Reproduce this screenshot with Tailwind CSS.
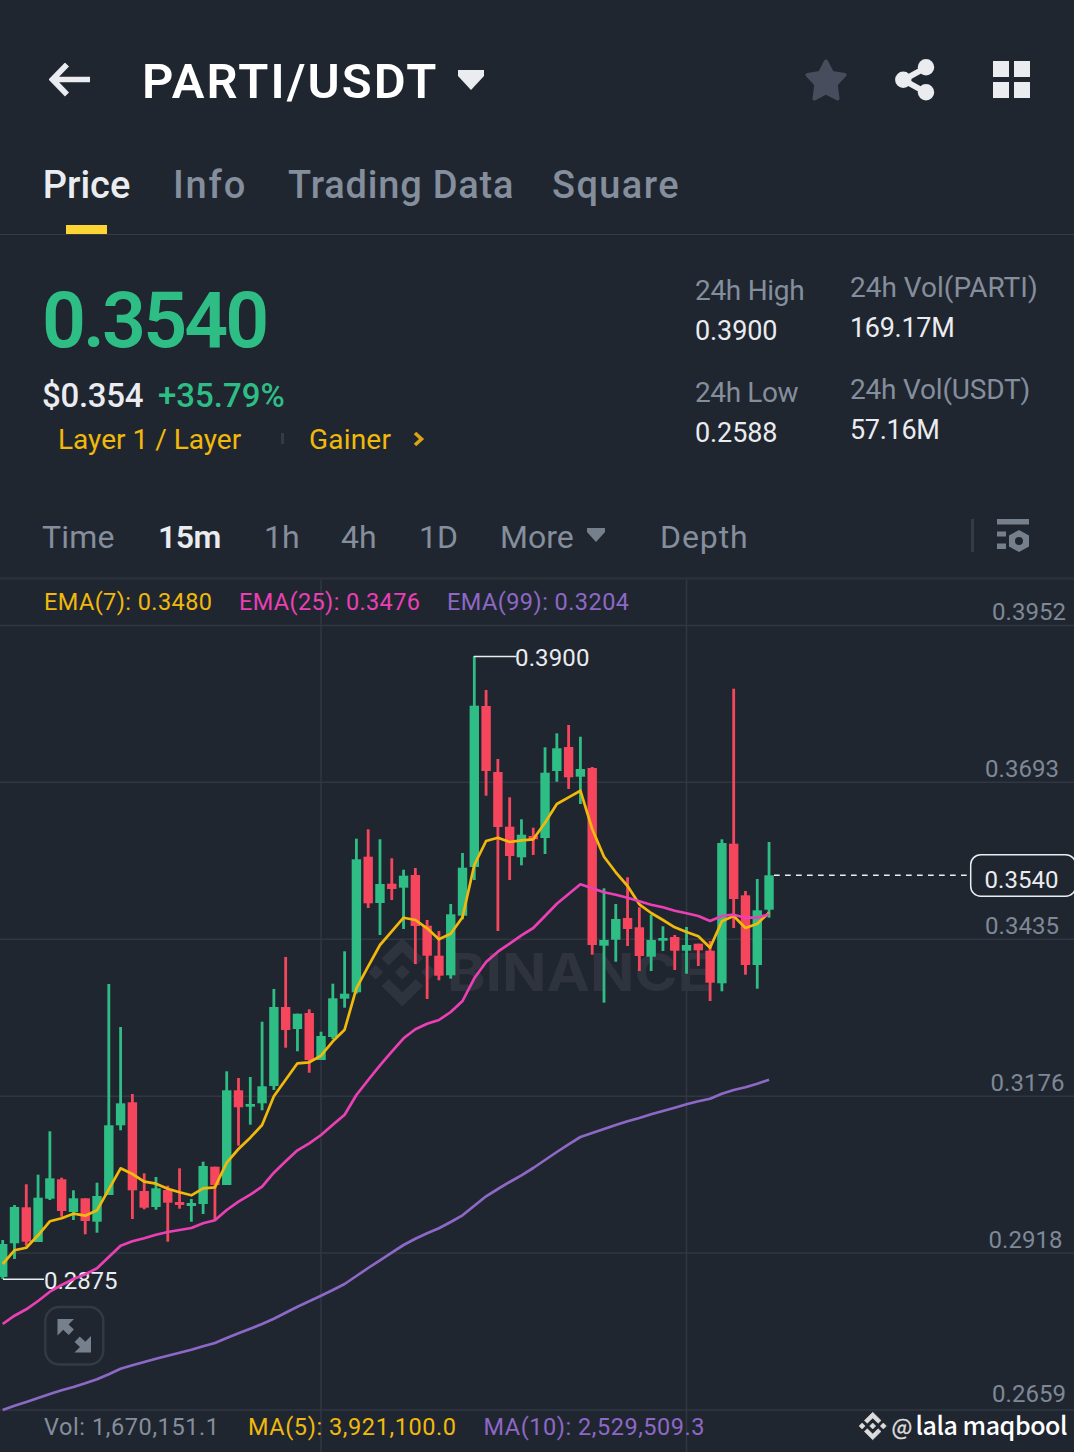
<!DOCTYPE html>
<html lang="en">
  <head>
    <meta charset="UTF-8" />
    <meta name="viewport" content="width=device-width, initial-scale=1.0" />
    <title>PARTI/USDT</title>
    <script src="https://cdn.jsdelivr.net/npm/@tailwindcss/browser@4"></script>
  </head>
  <body
    class="w-[1074px] h-[1452px] overflow-hidden bg-[#202630] font-[Roboto,sans-serif] text-[#848e9c] whitespace-nowrap"
  >
    <header class="flex items-center h-[160px] pl-[49px] pr-[44px]">
      <svg class="w-[42px] h-[34px]" viewBox="0 0 42 34" fill="none" stroke="#eaecef" stroke-width="5.6">
        <path d="M41 16.500H4M18 1.500L3.500 16.500L18 31.500" />
      </svg>
      <h1 class="ml-[51px] pt-[3px] w-[295px] text-[49px] leading-none font-semibold text-white tracking-[2.1px]">PARTI/USDT</h1>
      <svg class="ml-[21px] w-[26px] h-[20px]" viewBox="0 0 26 20" fill="#eaecef">
        <path d="M0 0H26V6L13 20L0 6Z" />
      </svg>
      <svg class="ml-auto w-[42px] h-[42px]" viewBox="0 0 42 42" fill="#474d5c" stroke="#474d5c" stroke-width="4" stroke-linejoin="round">
        <path d="M21 2.500L27 14L39.500 16L30.700 25.500L32.500 39.500L21 33.500L9.500 39.500L11.300 25.500L2.500 16L15 14Z" />
      </svg>
      <svg class="ml-[48px] w-[40px] h-[42px]" viewBox="0 0 40 42" fill="#eaecef">
        <path d="M31 8.500L8.500 21L31 33.500" fill="none" stroke="#eaecef" stroke-width="6" />
        <circle cx="31" cy="8.300" r="8.200" />
        <circle cx="8.300" cy="20.800" r="8.200" />
        <circle cx="31" cy="33.300" r="8.200" />
      </svg>
      <div class="ml-[58px] mb-px grid grid-cols-2 gap-[5px] w-[37px]">
        <span class="h-4 bg-[#eaecef]"></span>
        <span class="h-4 bg-[#eaecef]"></span>
        <span class="h-4 bg-[#eaecef]"></span>
        <span class="h-4 bg-[#eaecef]"></span>
      </div>
    </header>

    <nav class="flex h-[75px] pl-[42px] border-b border-[#333b47] text-[38px] leading-[50px] font-medium">
      <div class="flex flex-col justify-between items-center w-[89px] text-[#eaecef]">
        <a>Price</a>
        <span class="w-[41px] h-[9px] bg-[#fcd535]"></span>
      </div>
      <a class="ml-[42px] w-[73px] tracking-[1.8px]">Info</a>
      <a class="ml-[42px] w-[224px] tracking-[0.8px]">Trading Data</a>
      <a class="ml-[40px] w-[126px] tracking-[1.4px]">Square</a>
    </nav>

    <section class="flex h-[265px] pl-[42px]">
      <div class="w-[653px] pt-[46px]">
        <div class="text-[77px] leading-[80px] font-semibold text-[#2ebd85] tracking-[-2.9px]">0.3540</div>
        <div class="mt-[15px] flex text-[33px] leading-[40px] font-medium">
          <span class="w-[116px] text-[#eaecef] tracking-[-0.3px]">$0.354</span>
          <span class="text-[#2ebd85]">+35.79%</span>
        </div>
        <div class="mt-1 flex items-center pl-4 text-[28px] leading-[40px] text-[#f0b90b]">
          <span class="w-[223px]">Layer 1 / Layer</span>
          <span class="mb-[3px] w-[3px] h-[11px] bg-[#333b47]"></span>
          <span class="ml-[25px] w-[104px] tracking-[0.2px]">Gainer</span>
          <svg class="mb-[3px] w-[12px] h-[16px]" viewBox="0 0 12 16" fill="none" stroke="#d9a514" stroke-width="3.600">
            <path d="M2 2L8.500 8L2 14" />
          </svg>
        </div>
      </div>
      <dl class="w-[155px] pt-9 text-[28px] leading-[40px]">
        <dt class="-tracking-[0.3px]">24h High</dt>
        <dd class="text-[27px] text-[#eaecef] tracking-[-0.1px]">0.3900</dd>
        <dt class="mt-[22px] -tracking-[0.4px]">24h Low</dt>
        <dd class="text-[27px] text-[#eaecef] tracking-[-0.1px]">0.2588</dd>
      </dl>
      <dl class="pt-[33px] text-[28px] leading-[40px]">
        <dt>24h Vol(PARTI)</dt>
        <dd class="text-[27px] text-[#eaecef] tracking-[-0.3px]">169.17M</dd>
        <dt class="mt-[22px] tracking-[-0.2px]">24h Vol(USDT)</dt>
        <dd class="text-[27px] text-[#eaecef] tracking-[-0.3px]">57.16M</dd>
      </dl>
    </section>

    <section class="flex items-center h-[77px] pl-[42px] pb-[3px] text-[32px] leading-[40px]">
      <span class="w-[116px] tracking-[0.2px]">Time</span>
      <span class="w-[106px] font-semibold text-[#eaecef] tracking-[-0.5px]">15m</span>
      <span class="w-[77px]">1h</span>
      <span class="w-[78px]">4h</span>
      <span class="w-[81px]">1D</span>
      <span class="w-[87px]">More</span>
      <svg class="mb-1 w-[18px] h-[14px]" viewBox="0 0 18 14" fill="#76808d">
        <path d="M0 0H18V4L9 14L0 4Z" />
      </svg>
      <span class="ml-[55px] w-[311px] tracking-[0.9px]">Depth</span>
      <span class="mb-[3px] w-[3px] h-[33px] bg-[#333b47]"></span>
      <svg class="ml-[23px] mb-[3px] w-[32px] h-[33px]" viewBox="0 0 32 33" fill="#76808d">
        <path d="M0 0H32V5.500H0ZM0 12.500H9V17.500H0ZM0 24.500H9V30H0Z" />
        <path fill-rule="evenodd" d="M22 11L32 16.500V27.500L22 33L12 27.500V16.500ZM22 18A4 4 0 1 0 22 26A4 4 0 1 0 22 18Z" />
      </svg>
    </section>

    <!-- chart: user units are page pixels -->
    <svg class="block w-[1074px] h-[875px]" viewBox="0 577 1074 875" font-family="Roboto, sans-serif" font-size="24">
      <defs>
        <g id="logo">
          <path d="M0 -34.300L20.800 -13.700L13.500 -6.700L0 -20.300L-13.500 -6.700L-20.800 -13.700Z" />
          <path d="M0 34.300L20.800 13.700L13.500 6.700L0 20.300L-13.500 6.700L-20.800 13.700Z" />
          <path d="M0 -7.500L7.500 0L0 7.500L-7.500 0Z" />
          <path d="M-26.500 -7.500L-19 0L-26.500 7.500L-34 0Z" />
          <path d="M26.500 -7.500L34 0L26.500 7.500L19 0Z" />
        </g>
      </defs>

      <g fill="#2e333e">
        <use href="#logo" x="402.300" y="972.300" />
        <text x="447" y="991" font-family="Inter, sans-serif" font-weight="700" font-size="52.500" textLength="266" lengthAdjust="spacingAndGlyphs">BINANCE</text>
      </g>

      <path d="M0 578.500H1074" stroke="#282f39" stroke-width="3" />
      <path
        d="M0 625.500H1074M0 782.300H1074M0 939.200H1074M0 1096.200H1074M0 1253H1074M0 1410H1074M321 580V1452M686.500 580V1452"
        stroke="#303742" stroke-width="1.500"
      />

      <g id="candles"></g>

      <g fill="#eaecef">
        <path d="M474 656.500H516M3 1279.300H44" stroke="#eaecef" stroke-width="1.500" />
        <text x="515" y="665.700" textLength="74.500">0.3900</text>
        <text x="44" y="1289" textLength="73.500">0.2875</text>
      </g>

      <g id="lines" fill="none" stroke-width="2.700" stroke-linejoin="round"></g>

      <path d="M774 875.300H968" stroke="#eaecef" stroke-width="1.500" stroke-dasharray="5.700 5.300" />
      <rect x="970.700" y="854.700" width="105" height="41.500" rx="10" fill="#202630" stroke="#eaecef" stroke-width="1.500" />
      <text x="984.500" y="887.700" fill="#eaecef" textLength="74">0.3540</text>

      <g fill="#7f8896">
        <text x="992" y="619.700" textLength="74">0.3952</text>
        <text x="985" y="777" textLength="74">0.3693</text>
        <text x="985" y="934" textLength="74">0.3435</text>
        <text x="990.500" y="1091" textLength="74">0.3176</text>
        <text x="988.500" y="1248" textLength="74">0.2918</text>
        <text x="992" y="1402" textLength="74">0.2659</text>
      </g>

      <g font-size="23.500">
        <text x="44" y="609.700" fill="#f0b90b" textLength="168">EMA(7): 0.3480</text>
        <text x="239" y="609.700" fill="#eb40b5" textLength="181">EMA(25): 0.3476</text>
        <text x="447" y="609.700" fill="#8d68c6" textLength="182">EMA(99): 0.3204</text>
        <text x="44" y="1434.700" fill="#848e9c" textLength="175">Vol: 1,670,151.1</text>
        <text x="248" y="1434.700" fill="#f0b90b" textLength="208">MA(5): 3,921,100.0</text>
        <text x="483.500" y="1434.700" fill="#8d68c6" textLength="221">MA(10): 2,529,509.3</text>
      </g>

      <rect x="45.300" y="1307" width="58" height="57.500" rx="14" fill="#202630" stroke="#333a45" stroke-width="2.400" />
      <g fill="#76808d" stroke="#76808d">
        <path d="M57.500 1319H74L57.500 1335.500ZM91 1352.500H74.500L91 1336Z" stroke="none" />
        <path d="M62 1323.500L71.300 1332.300M86.500 1348L77.200 1339.200" stroke-width="7.500" />
      </g>

      <g font-family="'Noto Sans CJK SC', sans-serif" font-size="25">
        <use href="#logo" transform="translate(872.700 1426) scale(.4)" fill="#dcdcdc" stroke="#dcdcdc" stroke-width="1.500" />
        <text x="891.500" y="1434.700" font-size="22" fill="#dcdcdc" stroke="#dcdcdc" stroke-width=".4">@</text>
        <text x="915.500" y="1434.700" fill="#fff" font-weight="500" textLength="152">lala maqbool</text>
      </g>
    </svg>

    <script>
      // [up, high, body top, body bottom, low]
      const candles = [
        [1, 1240, 1244, 1277, 1279], [1, 1205, 1207, 1243.3, 1259], [0, 1184.3, 1207.3, 1241.7, 1245.7],
        [1, 1174.7, 1197.7, 1242, 1242], [1, 1131.3, 1178.3, 1198.7, 1200], [0, 1177.7, 1179.3, 1211, 1216.7],
        [1, 1190.3, 1198.3, 1212, 1220], [0, 1198.3, 1198.3, 1221, 1234.3], [1, 1182.7, 1196, 1221.7, 1232.7],
        [1, 984, 1125.3, 1195, 1195], [1, 1027, 1103.3, 1125.3, 1130.3], [0, 1094, 1102.3, 1190.3, 1219],
        [0, 1173.3, 1191, 1207.7, 1209.3], [1, 1177, 1188.3, 1207, 1209.7], [0, 1185.7, 1190, 1202.7, 1241.7],
        [0, 1168.3, 1202, 1205, 1208.7], [1, 1199, 1203, 1206, 1221.7], [1, 1161.7, 1166, 1204, 1214],
        [0, 1166.7, 1166.7, 1185, 1220], [1, 1071.3, 1090.3, 1185, 1185], [0, 1078, 1090.3, 1107.3, 1145.7],
        [1, 1077, 1104, 1106.7, 1124.7], [1, 1021.7, 1086.3, 1103.3, 1110.3], [1, 989, 1007, 1086, 1090],
        [0, 957, 1007, 1030, 1047.7], [1, 1013.7, 1013.7, 1029, 1051.3], [0, 1009.3, 1013, 1060, 1072.7],
        [1, 1031.7, 1036, 1060, 1060], [1, 983.7, 998.3, 1037, 1039], [1, 951.3, 993.7, 998.7, 1007.7],
        [1, 838.7, 859.3, 992.3, 993.7], [0, 829.3, 856.7, 903.3, 908], [1, 839.3, 884, 903, 935],
        [0, 858.3, 883.7, 889, 900], [1, 869.7, 875.7, 887.7, 929], [0, 868, 875, 926, 964],
        [0, 920, 925.7, 955.7, 999], [0, 931, 955.7, 975.7, 980.3], [1, 904, 914.3, 975.3, 978.7],
        [1, 853, 867.7, 915.7, 919.3], [1, 656, 705.7, 867, 880], [0, 690, 706, 771, 795.7],
        [0, 759, 772, 827, 931], [0, 797.3, 826.7, 856, 880], [1, 819.3, 834.7, 857.3, 865.3],
        [0, 827.7, 836, 839.3, 855], [1, 747.3, 772.7, 838, 854], [1, 733.3, 748.3, 771, 781.7],
        [0, 725, 747, 777.3, 789], [1, 736.7, 769, 776.7, 804], [0, 767, 768, 945, 954.7],
        [1, 888.3, 940, 945.7, 1002.7], [1, 904, 919, 939.7, 961.7], [0, 877.3, 918, 929, 946],
        [0, 907.3, 927.3, 956, 971], [1, 914.7, 940, 956.7, 971], [1, 926.3, 938, 940.7, 951],
        [0, 935, 937, 950.7, 970], [1, 927, 945, 950.7, 973.7], [0, 943.7, 943.7, 950.3, 966],
        [0, 941, 950.7, 982.7, 1001], [1, 839.3, 843, 983.3, 991.3], [0, 688.7, 843.7, 899, 928],
        [0, 891, 895.3, 965, 974.7], [1, 879, 910.3, 965, 988.7], [1, 842, 875.3, 909.7, 917.7],
      ];
      const ema7 = [
        1264, 1250.3, 1247.7, 1235.3, 1221.3, 1218.3, 1213.7, 1215.7, 1210.3, 1189.3, 1168.3,
        1174, 1181.7, 1183.7, 1188.7, 1192.3, 1195.3, 1188.3, 1187.3, 1162.7, 1149, 1137.7,
        1125, 1096.3, 1079.7, 1063.3, 1062.3, 1055.7, 1041.3, 1029.7, 988.3, 966.3, 945,
        931.3, 917.7, 920, 928.3, 939.3, 933.7, 917.3, 865, 841, 837.7, 842,
        840.3, 839.3, 822.7, 804, 797.3, 790.7, 829, 856.7, 872.3, 886, 904.3,
        913, 920, 927.3, 932, 936.3, 947.7, 921.3, 916, 928, 923.7, 912.7,
      ];
      const ema25 = [
        1324, 1315.7, 1309.3, 1301, 1291.7, 1285, 1279, 1274.3, 1268.3, 1257, 1245.7,
        1241.3, 1238.3, 1234.7, 1232, 1230, 1228, 1223.3, 1220.3, 1210, 1201.7, 1194.7,
        1186.7, 1172.7, 1161.3, 1150.3, 1143.3, 1135, 1124.7, 1114.7, 1095, 1080, 1065.3,
        1051.7, 1038.3, 1029.3, 1023.7, 1020, 1012, 1001, 978.3, 962, 951.7, 943.7,
        935.3, 928, 916, 903.7, 894, 884.3, 888.3, 892.3, 894.7, 897.7, 901.3,
        904.7, 907.3, 910.7, 913.3, 916, 921, 916, 914.7, 917.7, 917.7, 914.3,
      ];
      const ema99 = [
        1410, 1405.7, 1402, 1398, 1394, 1390.3, 1387, 1383.3, 1379.3, 1374.3, 1368.7,
        1365.3, 1362, 1358.7, 1355.7, 1352.7, 1349.7, 1346.3, 1343, 1338, 1333.3, 1328.7,
        1324, 1318.7, 1312.7, 1306.7, 1301.3, 1295.7, 1290, 1284, 1276, 1268, 1260.3,
        1252.7, 1245, 1238.7, 1233.3, 1228.3, 1222, 1215.3, 1205.7, 1196.3, 1189, 1182,
        1175.3, 1168, 1160, 1152, 1144.3, 1137, 1133, 1129, 1125, 1121.3, 1118,
        1114.3, 1111, 1107.7, 1104.3, 1101.3, 1098.7, 1093.7, 1090, 1087.3, 1083.7, 1079.7,
      ];

      const x = (i) => 2.7 + i * 11.79;
      document.getElementById("candles").innerHTML = candles
        .map(([up, high, top, bottom, low], i) => {
          const color = up ? "#2ebd85" : "#f6465d";
          return `<g fill="${color}">
            <rect x="${x(i) - 1.4}" y="${high}" width="2.8" height="${low - high}" />
            <rect x="${x(i) - 4.7}" y="${top}" width="9.4" height="${bottom - top}" />
          </g>`;
        })
        .join("");

      const line = (values, color) =>
        `<polyline stroke="${color}" points="${values.map((y, i) => `${x(i)},${y}`).join(" ")}" />`;
      document.getElementById("lines").innerHTML =
        line(ema7, "#f0b90b") + line(ema25, "#eb40b5") + line(ema99, "#8d68c6");
    </script>
  </body>
</html>
